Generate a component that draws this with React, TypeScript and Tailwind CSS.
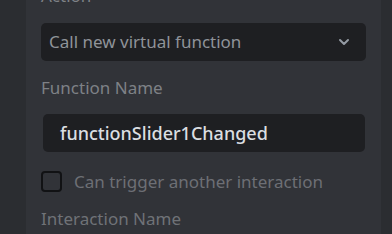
import React from "react";

export default function App() {
  return (
    <div className="w-[392px] h-[234px] overflow-hidden bg-[#2b2d31] flex" style={{ fontFamily: '"Noto Sans", "Open Sans", sans-serif' }}>
      <div className="ml-[26px] w-[355px] h-full bg-[#313338] flex flex-col px-[15px]">
        <div className="-mt-[15px] h-[22px] leading-[22px] text-[17px] text-[#7e8186]">Action</div>
        <div className="mt-[16px] h-[38px] rounded-[5px] bg-[#1e1f22] flex items-center justify-between pl-[8px] pr-[16px]">
          <span className="text-[17px] text-[#8f9399]">Call new virtual function</span>
          <svg width="12" height="8" viewBox="0 0 12 8" fill="none">
            <path d="M2 2l4 4 4-4" stroke="#949ba4" strokeWidth="2" strokeLinecap="round" strokeLinejoin="round" />
          </svg>
        </div>
        <div className="mt-[16px] h-[22px] leading-[22px] text-[17px] text-[#7e8186]">Function Name</div>
        <div className="mt-[15px] ml-[2px] mr-[1px] h-[38px] rounded-[5px] bg-[#1e1f22] flex items-center pl-[17px]">
          <span className="text-[18px] font-medium text-[#dbdee1]">functionSlider1Changed</span>
        </div>
        <div className="mt-[17px] flex items-center gap-[12px]">
          <div className="w-[21px] h-[21px] rounded-[4px] border-2 border-[#111214]" />
          <span className="text-[17px] text-[#6d6f75]">Can trigger another interaction</span>
        </div>
        <div className="mt-[13px] h-[22px] leading-[22px] text-[17px] text-[#6f7277]">Interaction Name</div>
      </div>
    </div>
  );
}
